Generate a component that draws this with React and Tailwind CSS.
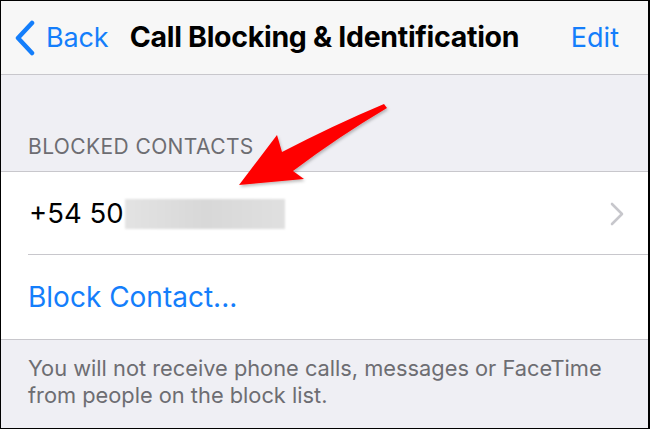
import React from 'react'

const FONT = { fontFamily: 'Inter, "Open Sans", "Liberation Sans", sans-serif' }

export default function App() {
  return (
    <div className="relative w-[650px] h-[429px] overflow-hidden border border-r-2 border-black bg-[#efeff4] flex flex-col" style={FONT}>
      {/* Nav bar */}
      <header className="h-[74px] shrink-0 bg-[#f7f7f7] border-b border-[#c8c7cc] flex items-center px-[13px]">
        <div className="flex items-center gap-[10px] text-[#147efb] w-[110px]">
          <svg width="22" height="36" viewBox="0 0 22 36" className="shrink-0">
            <path d="M18 3 L4 18 L18 33" fill="none" stroke="#147efb" strokeWidth="4.5" strokeLinecap="round" strokeLinejoin="round" />
          </svg>
          <span className="text-[27px] leading-none tracking-[-0.2px]">Back</span>
        </div>
        <h1 className="flex-1 text-center text-[28.5px] font-bold text-black leading-none tracking-[-0.3px] whitespace-nowrap">Call Blocking &amp; Identification</h1>
        <span className="w-[110px] text-right pr-[16px] text-[27px] leading-none text-[#147efb]">Edit</span>
      </header>

      {/* Section header */}
      <div className="h-[96px] shrink-0 flex items-end pb-[14px] pl-[27px]">
        <span className="text-[21px] leading-none text-[#6d6d72] tracking-[0.4px]">BLOCKED CONTACTS</span>
      </div>

      {/* Group */}
      <div className="bg-white border-t border-b border-[#c8c7cc] shrink-0">
        <div className="h-[83px] flex items-center pl-[28px] pr-[24px] relative">
          <span className="text-[27.5px] text-black leading-none">+54 50</span>
          <div className="ml-[2px] w-[160px] h-[30px] bg-gradient-to-r from-[#e3e3e3] via-[#d8d8d8] to-[#e0e0e0] blur-[1px]" />
          <div className="flex-1" />
          <svg width="14" height="24" viewBox="0 0 14 24">
            <path d="M2 2 L12 12 L2 22" fill="none" stroke="#c7c7cc" strokeWidth="2.6" strokeLinecap="round" strokeLinejoin="round" />
          </svg>
          <div className="absolute left-[27px] right-0 bottom-0 h-px bg-[#c8c7cc]" />
        </div>
        <div className="h-[84px] flex items-center pl-[27px]">
          <span className="text-[28px] text-[#147efb] leading-none">Block Contact...</span>
        </div>
      </div>

      {/* Footer */}
      <p className="pl-[27px] pr-[26px] pt-[15px] text-[21.8px] leading-[27px] text-[#6d6d72]">
        You will not receive phone calls, messages or FaceTime from people on the block list.
      </p>

      {/* Arrow annotation */}
      <svg className="absolute left-0 top-0 pointer-events-none" width="650" height="429" viewBox="0 0 650 429">
        <defs>
          <filter id="sh" x="-20%" y="-20%" width="140%" height="140%">
            <feDropShadow dx="1" dy="2" stdDeviation="1.5" floodColor="#000" floodOpacity="0.25" />
          </filter>
        </defs>
        <path d="M383 103 Q333 124 281 151 L276 134 L238 184 L303 178 L292 170 Q337 136 386 107 Z" fill="#ff0000" filter="url(#sh)" />
      </svg>
    </div>
  )
}
